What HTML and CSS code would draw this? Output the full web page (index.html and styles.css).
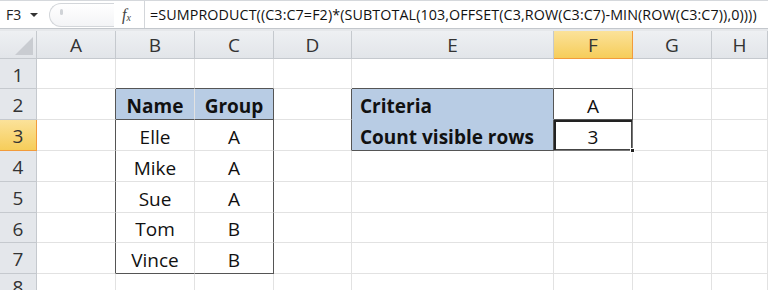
FILE: index.html
```html
<!DOCTYPE html>
<html lang="en">
<head>
  <meta charset="UTF-8" />
  <title>Count visible rows</title>
  <link rel="stylesheet" href="styles.css">
</head>
<body>
  <div class="formula-bar">
    <div class="name-box">F3 <span class="drop"></span></div>
    <div class="splitter"><span class="dot"></span></div>
    <div class="fx"><i>f</i><sub>x</sub></div>
    <div class="formula">=SUMPRODUCT((C3:C7=F2)*(SUBTOTAL(103,OFFSET(C3,ROW(C3:C7)-MIN(ROW(C3:C7)),0))))</div>
  </div>
  <div class="band"></div>

  <div class="sheet">
    <!-- column headers -->
    <div class="hd corner"><span class="tri"></span></div>
    <div class="hd">A</div><div class="hd">B</div><div class="hd">C</div><div class="hd">D</div>
    <div class="hd">E</div><div class="hd sel">F</div><div class="hd">G</div><div class="hd">H</div>

    <!-- row 1 -->
    <div class="rh">1</div>
    <div class="c"></div><div class="c bb"></div><div class="c bb"></div><div class="c"></div>
    <div class="c bb"></div><div class="c bb"></div><div class="c"></div><div class="c"></div>

    <!-- row 2 -->
    <div class="rh">2</div>
    <div class="c br"></div>
    <div class="c th bb">Name</div>
    <div class="c th bb br">Group</div>
    <div class="c br"></div>
    <div class="c lbl br">Criteria</div>
    <div class="c mid br bb">A</div>
    <div class="c"></div><div class="c"></div>

    <!-- row 3 -->
    <div class="rh sel">3</div>
    <div class="c br"></div>
    <div class="c mid">Elle</div>
    <div class="c mid br">A</div>
    <div class="c br"></div>
    <div class="c lbl br bb">Count visible rows</div>
    <div class="c mid active">3<span class="handle"></span></div>
    <div class="c"></div><div class="c"></div>

    <!-- row 4 -->
    <div class="rh">4</div>
    <div class="c br"></div>
    <div class="c mid">Mike</div>
    <div class="c mid br">A</div>
    <div class="c"></div><div class="c"></div><div class="c"></div><div class="c"></div><div class="c"></div>

    <!-- row 5 -->
    <div class="rh">5</div>
    <div class="c br"></div>
    <div class="c mid">Sue</div>
    <div class="c mid br">A</div>
    <div class="c"></div><div class="c"></div><div class="c"></div><div class="c"></div><div class="c"></div>

    <!-- row 6 -->
    <div class="rh">6</div>
    <div class="c br"></div>
    <div class="c mid">Tom</div>
    <div class="c mid br">B</div>
    <div class="c"></div><div class="c"></div><div class="c"></div><div class="c"></div><div class="c"></div>

    <!-- row 7 -->
    <div class="rh">7</div>
    <div class="c br"></div>
    <div class="c mid bb">Vince</div>
    <div class="c mid br bb">B</div>
    <div class="c"></div><div class="c"></div><div class="c"></div><div class="c"></div><div class="c"></div>

    <!-- row 8 -->
    <div class="rh last">8</div>
    <div class="c"></div><div class="c"></div><div class="c"></div><div class="c"></div>
    <div class="c"></div><div class="c"></div><div class="c"></div><div class="c"></div>
  </div>
</body>
</html>
```

FILE: styles.css
```css
body { margin: 0; width: 768px; height: 290px; overflow: hidden; background: #fff; font-family: "Open Sans", "Noto Sans", sans-serif; color: #222; }

/* formula bar */
.formula-bar { display: flex; align-items: center; height: 27px; border-top: 1px solid #d5d8dc; border-bottom: 1px solid #c3c7cc; background: #fff; }
.name-box { width: 42px; padding-left: 6px; font-size: 14px; color: #222; display: flex; align-items: center; gap: 9px; }
.drop { width: 0; height: 0; border-left: 4px solid transparent; border-right: 4px solid transparent; border-top: 4px solid #333; }
.splitter { width: 64px; height: 22px; margin-left: 1px; border: 1px solid #d3d6da; border-right: none; border-radius: 12px 0 0 12px; background: linear-gradient(#fff, #f3f4f6); position: relative; }
.dot { position: absolute; left: 10px; top: 5px; width: 3px; height: 6px; border-radius: 2px; background: #d0d3d7; }
.fx { width: 22px; font-family: "Liberation Serif", serif; font-size: 16px; color: #444; padding-left: 8px; }
.fx sub { font-size: 10px; font-style: italic; vertical-align: -1px; }
.formula { flex: 1; height: 27px; line-height: 28px; border-left: 1px solid #d3d6da; padding-left: 5px; font-size: 14.3px; letter-spacing: 0.1px; color: #111; white-space: nowrap; overflow: hidden; }
.band { height: 2px; background: #e6e8eb; }

/* grid */
.sheet { display: grid; grid-template-columns: 37px 79px 79px 79px 78px 202px 79px 79px 56px; grid-template-rows: 28px 30px 31px 31px 31px 31px 30px 31px 17px; }
.hd, .rh { background: linear-gradient(#eef0f3, #e2e5e9); color: #333; font-size: 19px; display: flex; align-items: center; justify-content: center; border-right: 1px solid #c5c9ce; border-bottom: 1px solid #c5c9ce; box-sizing: border-box; }
.rh { background: #e4e7eb; padding-top: 2px; }
.rh.last { align-items: flex-start; padding-top: 0; line-height: 26px; }
.hd.sel, .rh.sel { background: linear-gradient(#fbe29a, #f6cd5a); border-right-color: #f29b3b; border-bottom-color: #f29b3b; color: #333; }
.corner { position: relative; }
.tri { position: absolute; right: 3px; bottom: 3px; width: 0; height: 0; border-left: 18px solid transparent; border-bottom: 18px solid #c9ccd1; }

.c { border-right: 1px solid #e2e2e2; border-bottom: 1px solid #e2e2e2; box-sizing: border-box; font-size: 19px; display: flex; align-items: center; padding-top: 3px; color: #111; }
.c.br { border-right-color: #555; }
.c.bb { border-bottom-color: #555; }
.mid { justify-content: center; }
.th { justify-content: center; font-weight: 700; background: #b8cce4; }
.lbl { font-weight: 700; background: #b8cce4; padding-left: 8px; border-bottom-color: #b8cce4; }
.active { position: relative; box-shadow: inset 2px 2px 0 #222, inset -1px -1px 0 #444; border-right-color: #777; border-bottom-color: #777; }
.handle { position: absolute; right: -3px; bottom: -3px; width: 5px; height: 5px; background: #222; border: 1px solid #fff; box-sizing: border-box; }
```
